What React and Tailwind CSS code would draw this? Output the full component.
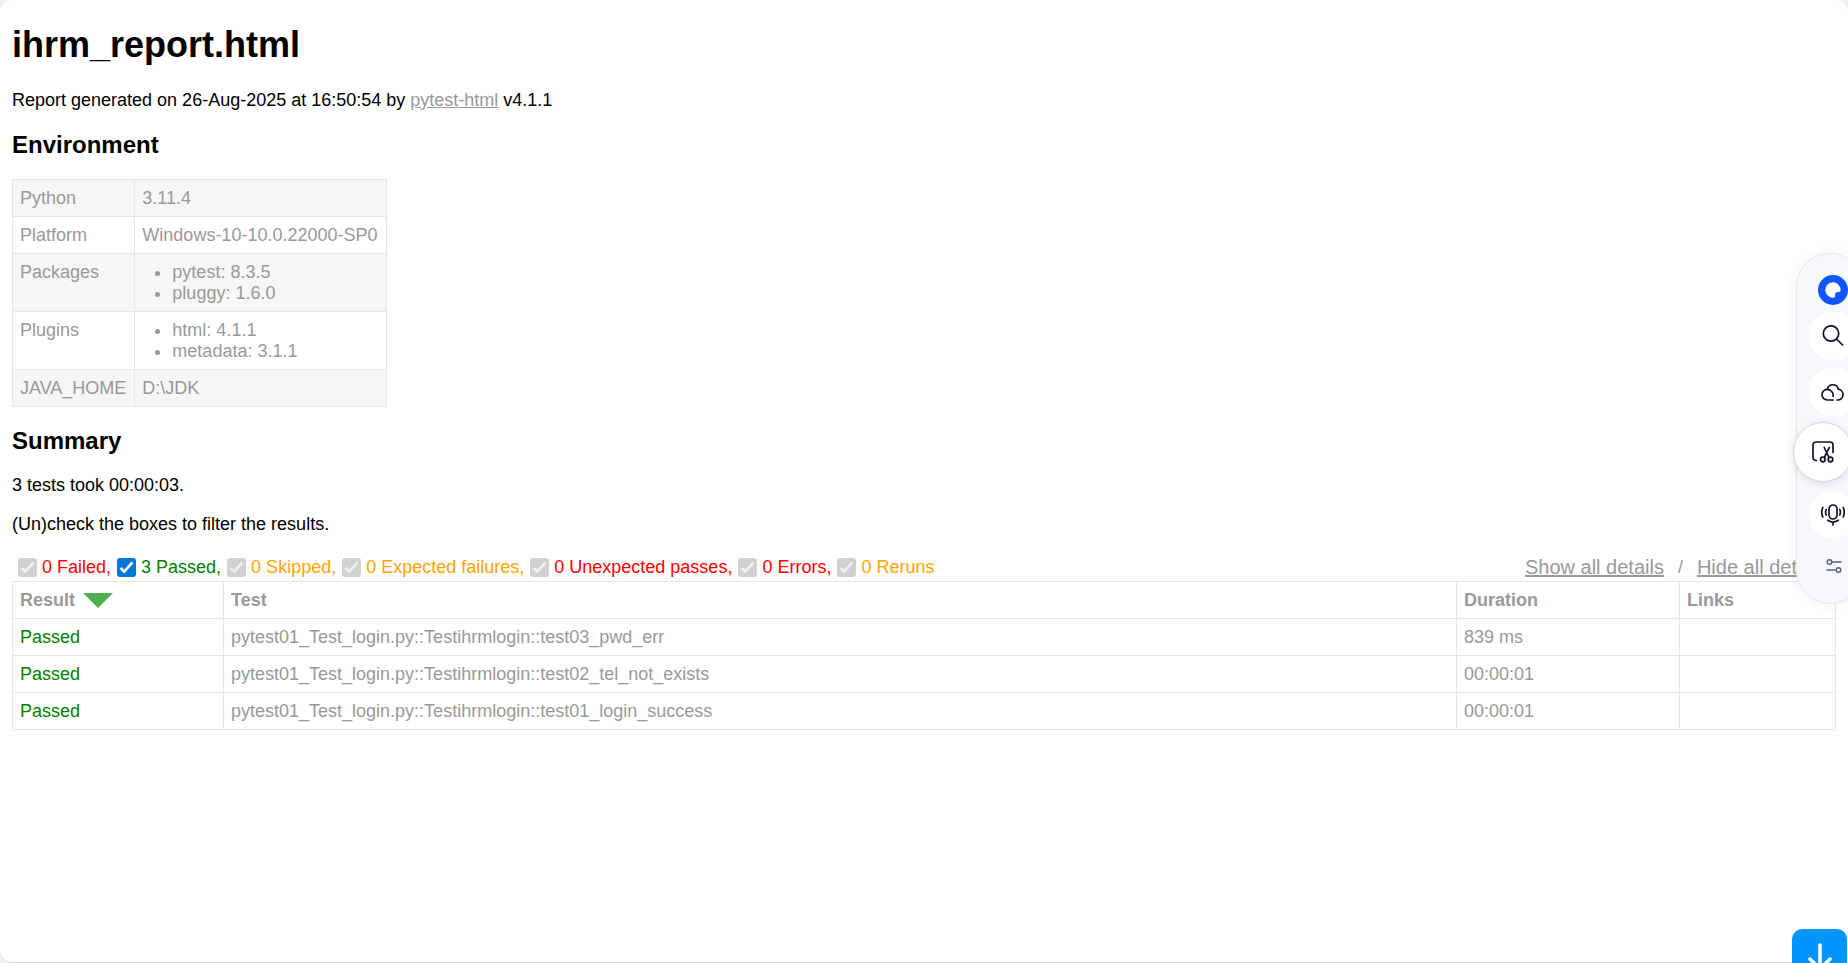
import { useState } from 'react';

const environment = [
  { name: 'Python', value: '3.11.4' },
  { name: 'Platform', value: 'Windows-10-10.0.22000-SP0' },
  { name: 'Packages', value: ['pytest: 8.3.5', 'pluggy: 1.6.0'] },
  { name: 'Plugins', value: ['html: 4.1.1', 'metadata: 3.1.1'] },
  { name: 'JAVA_HOME', value: 'D:\\JDK' },
];

const filters = [
  { id: 'failed', label: '0 Failed,', color: 'text-[#ff0000]', disabled: true },
  { id: 'passed', label: '3 Passed,', color: 'text-[#008000]', disabled: false },
  { id: 'skipped', label: '0 Skipped,', color: 'text-[#ffa500]', disabled: true },
  { id: 'xfailed', label: '0 Expected failures,', color: 'text-[#ffa500]', disabled: true },
  { id: 'xpassed', label: '0 Unexpected passes,', color: 'text-[#ff0000]', disabled: true },
  { id: 'error', label: '0 Errors,', color: 'text-[#ff0000]', disabled: true },
  { id: 'rerun', label: '0 Reruns', color: 'text-[#ffa500]', disabled: true },
];

const results = [
  { test: 'pytest01_Test_login.py::Testihrmlogin::test03_pwd_err', duration: '839 ms' },
  { test: 'pytest01_Test_login.py::Testihrmlogin::test02_tel_not_exists', duration: '00:00:01' },
  { test: 'pytest01_Test_login.py::Testihrmlogin::test01_login_success', duration: '00:00:01' },
];

const cell = 'border border-[#e6e6e6] pt-2 pr-2 pb-[7px] pl-[7px]';

function Filter({ id, label, color, disabled }) {
  const [checked, setChecked] = useState(true);
  return (
    <span className="flex items-center gap-[5px]">
      <span className="relative flex">
        <input
          id={id}
          type="checkbox"
          disabled={disabled}
          checked={checked}
          onChange={e => setChecked(e.target.checked)}
          className="size-[19px] appearance-none rounded-[3px] border border-[#767676] checked:border-0 checked:bg-[#0078d7] disabled:bg-[#d1d1d1]"
        />
        {checked && (
          <svg viewBox="0 0 19 19" className={`pointer-events-none absolute inset-0 size-[19px] ${disabled ? 'text-[#efefef]' : 'text-white'}`}>
            <path d="M3.6 10 7.2 13.6 15.4 4.4" fill="none" stroke="currentColor" strokeWidth="2.6" />
          </svg>
        )}
      </span>
      <label htmlFor={id} className={color}>{label}</label>
    </span>
  );
}

// Floating browser helper, half tucked behind the right edge
function SideBar() {
  return (
    <aside className="absolute top-[253px] -right-4 flex w-[68px] flex-col items-center rounded-[36px] border border-[#e6e7ea] bg-[#f6f8fb] pt-[21px] pb-[30px] text-[#12122e] shadow-[0_0_14px_rgba(0,0,0,0.06)]">
      <button aria-label="Assistant" className="ml-1.5">
        <svg width="30" height="30" viewBox="0 0 30 30">
          <circle cx="15" cy="15" r="15" fill="#0f56ff" />
          <path d="M22.6 15.8A7.7 7.7 0 1 0 15.8 22.6C17.4 22.4 17.2 21.2 17.1 20 17 17.600 18 16.900 20 16.900 21.400 16.900 22.400 17 22.600 15.800Z" fill="#fff" />
        </svg>
      </button>
      <button aria-label="Search" className="mt-[7px] ml-1.5 flex size-12 items-center justify-center rounded-full bg-white">
        <svg width="22" height="22" viewBox="0 0 22 22" fill="none" stroke="currentColor" strokeWidth="1.7" strokeLinecap="round">
          <circle cx="9" cy="8.5" r="7.7" />
          <path d="M14.500 14 20.500 20" />
        </svg>
      </button>
      <button aria-label="Cloud drive" className="mt-2 ml-1.5 flex size-12 items-center justify-center rounded-full bg-white">
        <svg width="24" height="18" viewBox="0 0 24 18" fill="none" stroke="currentColor" strokeWidth="1.7" strokeLinecap="round">
          <path d="M12.200 13.200V12.500A6 6 0 0 0 6.300 6.400 5.300 5.300 0 0 0 6.300 17H12.200" />
          <path d="M6.300 6.400A5.600 5.600 0 0 1 17.300 6.200 5.450 5.450 0 0 1 17.300 17H16" />
        </svg>
      </button>
      <button aria-label="Screenshot" className="mt-1.5 mr-3.5 flex size-[60px] shrink-0 items-center justify-center rounded-full border border-[#d8d9e0] bg-white shadow-[0_2px_8px_rgba(0,0,0,0.1)]">
        <svg width="22" height="22" viewBox="0 0 22 22" fill="none" stroke="currentColor" strokeWidth="1.7" strokeLinecap="round">
          <path d="M4.300 19.500H4A3 3 0 0 1 1 16.500V4A3 3 0 0 1 4 1H18A3 3 0 0 1 21 4V11.500" />
          <path d="M12.200 6.500 17 16.500M17.300 6.500 12.300 16.500" />
          <circle cx="10.800" cy="18.500" r="2.300" />
          <circle cx="18.500" cy="18.500" r="2.300" />
        </svg>
      </button>
      <button aria-label="Voice" className="mt-[9px] ml-1.5 flex size-12 items-center justify-center rounded-full bg-white">
        <svg width="26" height="22" viewBox="0 0 26 22" fill="none" stroke="currentColor" strokeWidth="1.7" strokeLinecap="round">
          <rect x="9" y="1" width="8" height="14" rx="4" />
          <path d="M7.800 16.200Q13 20 18.200 16.200M13 18.200V21M6.200 5.500Q5 8.200 6.200 11M19.800 5.500Q21 8.200 19.800 11M2.800 3.500Q.6 8.200 2.800 13M23.200 3.500Q25.400 8.200 23.200 13" />
        </svg>
      </button>
      <button aria-label="Settings" className="mt-5 ml-2 text-[#5f6078]">
        <svg width="16" height="14" viewBox="0 0 16 14" fill="none" stroke="currentColor" strokeWidth="1.5">
          <circle cx="3.500" cy="3" r="2.250" />
          <path d="M6 3H15.500M.5 11H9.500" />
          <circle cx="12.500" cy="11" r="2.250" />
        </svg>
      </button>
    </aside>
  );
}

export default function App() {
  return (
    <div className="relative min-h-screen overflow-hidden bg-[#f0f0f0] font-['Liberation_Sans',Arial,sans-serif] text-[18px] leading-[21px] text-black">
      <main className="min-h-screen rounded-xl border-b border-[#d9d9d9] bg-white px-3 pt-6">
        <h1 className="text-4xl leading-[41px] font-bold">ihrm_report.html</h1>
        <p className="mt-[25px]">
          Report generated on 26-Aug-2025 at 16:50:54 by <a href="#pytest-html" className="text-[#999999] underline">pytest-html</a> v4.1.1
        </p>

        <h2 className="mt-5 text-2xl leading-[28px] font-bold">Environment</h2>
        <table className="mt-5 border-collapse text-[#999999]">
          <tbody>
            {environment.map(row => (
              <tr key={row.name} className="align-top odd:bg-[#f6f6f6]">
                <td className={cell}>{row.name}</td>
                <td className={cell}>
                  {Array.isArray(row.value)
                    ? <ul className="list-disc pl-[30px]">{row.value.map(v => <li key={v}>{v}</li>)}</ul>
                    : row.value}
                </td>
              </tr>
            ))}
          </tbody>
        </table>

        <h2 className="mt-5 text-2xl leading-[28px] font-bold">Summary</h2>
        <p className="mt-5">3 tests took 00:00:03.</p>
        <p className="mt-[18px]">(Un)check the boxes to filter the results.</p>

        <div className="mt-[22px] flex items-center justify-between">
          <div className="flex gap-1.5 pl-1.5">
            {filters.map(f => <Filter key={f.id} {...f} />)}
          </div>
          <div className="flex gap-3.5 pr-[9px] text-[#999999]">
            <button className="text-[20px] underline">Show all details</button>
            <span>/</span>
            <button className="text-[20px] underline">Hide all details</button>
          </div>
        </div>

        <table className="mt-[3px] w-full table-fixed border-collapse text-left text-[#999999]">
          <thead>
            <tr>
              <th className={`w-[211px] ${cell}`}>
                <span className="flex items-center gap-2">
                  Result
                  <svg width="30" height="15" viewBox="0 0 30 15"><path d="M0 0H30L15 15Z" fill="#4caf50" /></svg>
                </span>
              </th>
              <th className={cell}>Test</th>
              <th className={`w-[223px] ${cell}`}>Duration</th>
              <th className={`w-[156px] ${cell}`}>Links</th>
            </tr>
          </thead>
          <tbody>
            {results.map(r => (
              <tr key={r.test}>
                <td className={`${cell} text-[#008000]`}>Passed</td>
                <td className={cell}>{r.test}</td>
                <td className={cell}>{r.duration}</td>
                <td className={cell}></td>
              </tr>
            ))}
          </tbody>
        </table>
      </main>

      <SideBar />
      <button aria-label="Download" className="absolute right-px -bottom-5 flex h-[54px] w-[55px] justify-center rounded-[10px] bg-[#0095ff] pt-3.5">
        <svg width="24" height="30" viewBox="0 0 24 30" fill="none" stroke="#fff" strokeWidth="3.500" strokeLinecap="round" strokeLinejoin="round">
          <path d="M12 2V25M2 16 12 26 22 16" />
        </svg>
      </button>
    </div>
  );
}
